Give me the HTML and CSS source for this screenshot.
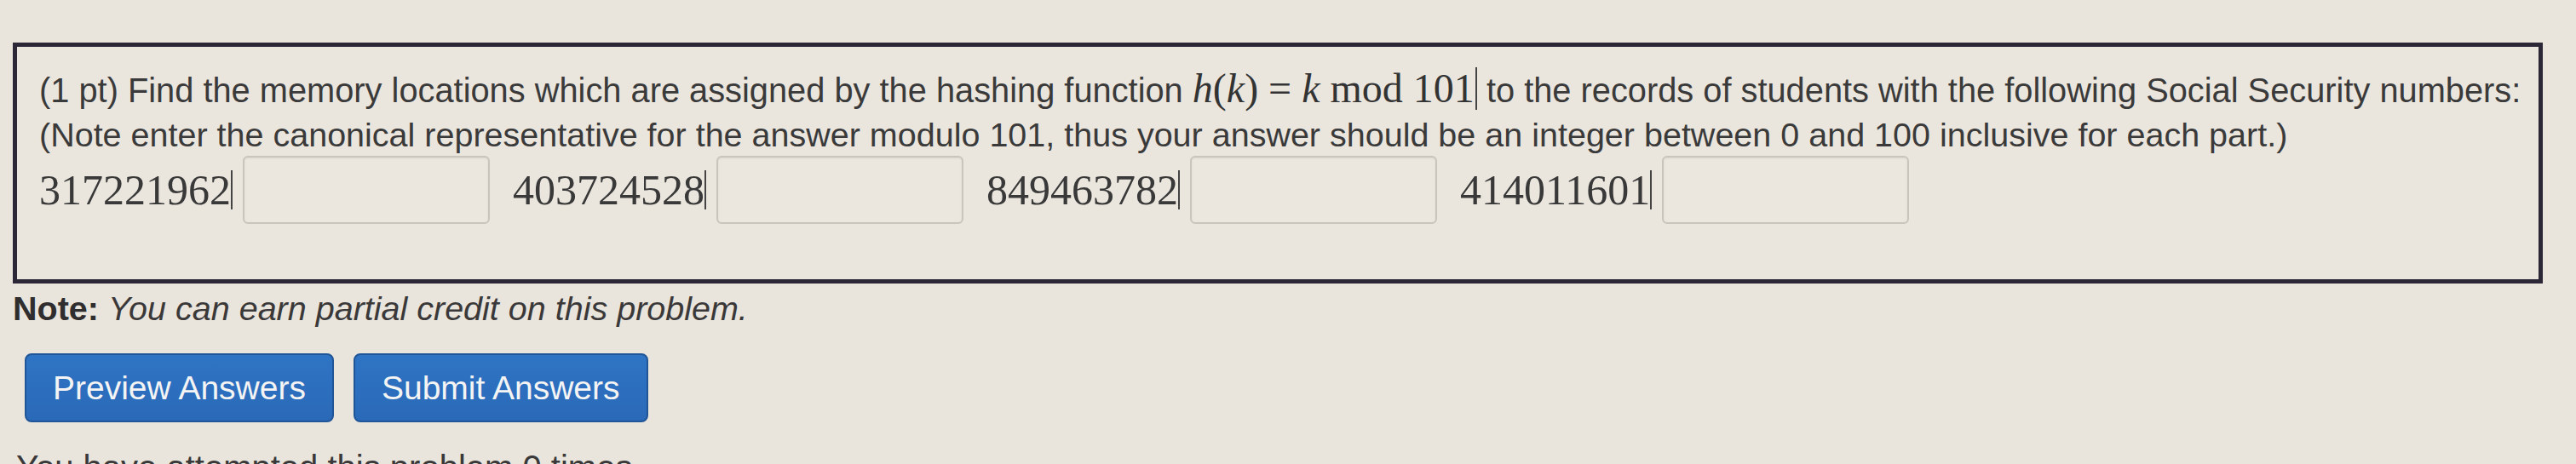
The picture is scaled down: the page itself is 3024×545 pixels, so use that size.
FILE: index.html
```html
<!DOCTYPE html>
<html>
<head>
<meta charset="utf-8">
<link rel="stylesheet" href="styles.css">
</head>
<body>
<div class="page">
  <div class="problem">
    <p class="line first">(1 pt) Find the memory locations which are assigned by the hashing function <span class="math"><i>h</i>(<i>k</i>) = <i>k</i> mod 101<span class="caret"></span></span> to the records of students with the following Social Security numbers:</p>
    <p class="line">(Note enter the canonical representative for the answer modulo 101, thus your answer should be an integer between 0 and 100 inclusive for each part.)</p>
    <div class="answers">
      <span class="num">317221962<span class="caret"></span></span><input class="box" type="text">
      <span class="num">403724528<span class="caret"></span></span><input class="box" type="text">
      <span class="num">849463782<span class="caret"></span></span><input class="box" type="text">
      <span class="num">414011601<span class="caret"></span></span><input class="box" type="text">
    </div>
  </div>
  <p class="note"><b>Note:</b> <i>You can earn partial credit on this problem.</i></p>
  <div class="buttons">
    <button class="btn">Preview Answers</button>
    <button class="btn">Submit Answers</button>
  </div>
  <p class="attempts">You have attempted this problem 0 times.</p>
</div>
</body>
</html>
```
FILE: styles.css
```css
html, body {
  margin: 0;
  padding: 0;
}
body {
  background: #e9e5dd;
  font-family: "Liberation Sans", Arial, sans-serif;
  color: #3b3a3a;
  width: 3024px;
  height: 545px;
  overflow: hidden;
}
.page {
  padding: 50px 0 0 15px;
}
.problem {
  width: 2934px;
  border: 5px solid #2b2737;
  padding: 24px 0 0 26px;
  height: 249px;
  box-sizing: content-box;
  background: #eae6de;
}
.line {
  margin: 0;
  font-size: 39.5px;
  line-height: 52px;
  white-space: nowrap;
}
.line.first {
  font-size: 39.8px;
}
.math {
  font-family: "Liberation Serif", "Times New Roman", serif;
  font-size: 48px;
  line-height: 40px;
  color: #333;
}
.caret {
  display: inline-block;
  width: 2px;
  height: 50px;
  background: #444;
  vertical-align: -9px;
  margin-left: 1px;
}
.answers {
  display: flex;
  align-items: center;
  margin-top: -2px;
  height: 82px;
}
.num {
  font-family: "Liberation Serif", "Times New Roman", serif;
  font-size: 50px;
  color: #3a3939;
  margin-right: 12px;
}
.num .caret {
  height: 46px;
  vertical-align: -6px;
  margin-left: 0;
}
.box {
  width: 290px;
  height: 80px;
  box-sizing: border-box;
  border: 2px solid #c9c4bc;
  border-radius: 6px;
  background: #ebe7df;
  margin: 0 27px 0 0;
  padding: 0;
  box-shadow: inset 0 1px 2px rgba(0,0,0,0.08);
}
.note {
  margin: 6px 0 0 0;
  font-size: 39.5px;
  line-height: 46px;
  color: #3a3838;
}
.note b {
  color: #2f2d2d;
}
.buttons {
  display: flex;
  gap: 23px;
  margin: 30px 0 0 14px;
}
.btn {
  height: 81px;
  padding: 0 31px;
  font-family: "Liberation Sans", Arial, sans-serif;
  font-size: 39px;
  color: #f4f4f4;
  background: linear-gradient(#2f74c4, #2a69b8);
  border: 2px solid #205597;
  border-radius: 8px;
}
.attempts {
  margin: 30px 0 0 4px;
  font-size: 40px;
  line-height: 46px;
  color: #3a3838;
}
```
